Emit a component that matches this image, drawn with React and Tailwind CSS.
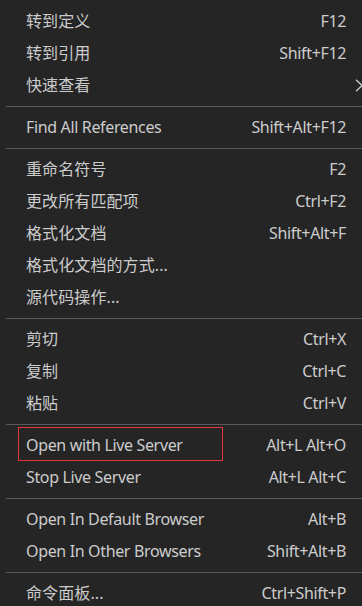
const groups = [
  [
    ['转到定义', 'F12'],
    ['转到引用', 'Shift+F12'],
    ['快速查看', '', true],
  ],
  [['Find All References', 'Shift+Alt+F12']],
  [
    ['重命名符号', 'F2'],
    ['更改所有匹配项', 'Ctrl+F2'],
    ['格式化文档', 'Shift+Alt+F'],
    ['格式化文档的方式...', ''],
    ['源代码操作...', ''],
  ],
  [
    ['剪切', 'Ctrl+X'],
    ['复制', 'Ctrl+C'],
    ['粘贴', 'Ctrl+V'],
  ],
  [
    ['Open with Live Server', 'Alt+L Alt+O', false, true],
    ['Stop Live Server', 'Alt+L Alt+C'],
  ],
  [
    ['Open In Default Browser', 'Alt+B'],
    ['Open In Other Browsers', 'Shift+Alt+B'],
  ],
  [['命令面板...', 'Ctrl+Shift+P']],
]

function Row({ label, keys, submenu, boxed }) {
  const cjk = /[\u4e00-\u9fff]/.test(label)
  return (
    <div className="relative flex items-center h-8 pl-5">
      {boxed && (
        <div className="absolute left-[12px] top-[-2px] w-[205px] h-[34px] border border-[#e0383b]" />
      )}
      <span className={cjk ? 'flex-1 whitespace-nowrap tracking-[0.1px]' : 'flex-1 whitespace-nowrap'}>{label}</span>
      <span className="whitespace-nowrap">{keys}</span>
      <span className="w-[26px] flex items-center pl-[9px]">
        {submenu && (
          <svg width="8" height="13" viewBox="0 0 8 13" fill="none">
            <path d="M1 0.8 L7 6.5 L1 12.2" stroke="#cccccc" strokeWidth="1.3" />
          </svg>
        )}
      </span>
    </div>
  )
}

export default function App() {
  return (
    <div className="w-[362px] h-[606px] overflow-hidden bg-[#252526] text-[#cccccc] text-[16px] tracking-[-0.35px] font-['Noto_Sans','Noto_Sans_CJK_SC',sans-serif]">
      <div className="w-[372px] pl-[6px] pt-[5px]">
        {groups.map((g, i) => (
          <div key={i}>
            {i > 0 && <div className="my-[4.5px] h-px bg-[#5a5a5a]" />}
            {g.map(([label, keys, submenu, boxed]) => (
              <Row key={label} label={label} keys={keys} submenu={submenu} boxed={boxed} />
            ))}
          </div>
        ))}
      </div>
    </div>
  )
}
